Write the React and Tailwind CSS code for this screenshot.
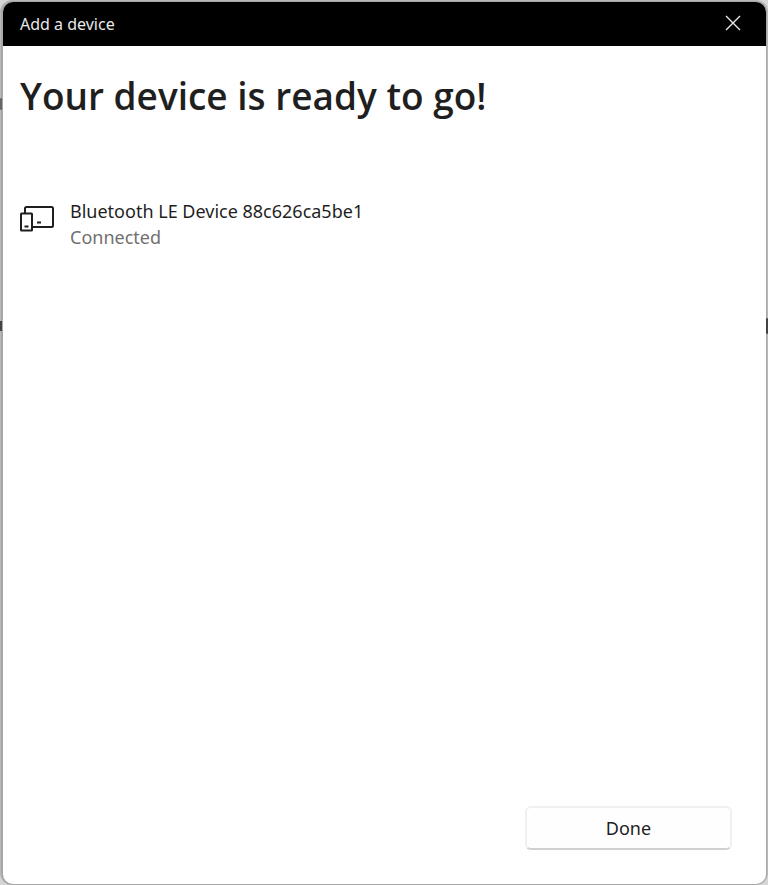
function CloseIcon() {
  return (
    <svg width="16" height="16" viewBox="0 0 16 16" fill="none" stroke="#e8e8e8" strokeWidth="1.4" aria-hidden="true">
      <path d="M1 1l14 14M15 1L1 15" />
    </svg>
  );
}

function DevicesIcon() {
  return (
    <svg width="34" height="26" viewBox="0 0 34 26" fill="none" stroke="#1f1f1f" strokeWidth="2" aria-hidden="true">
      <path d="M5 7V2.500a1.500 1.500 0 0 1 1.500-1.500H31.500a1.500 1.500 0 0 1 1.500 1.500V19.500a1.500 1.500 0 0 1-1.500 1.500H12" />
      <rect x="1" y="7.500" width="11" height="17" rx="0.500" />
      <path d="M17 16.500h4M4.500 20.500h4" />
    </svg>
  );
}

export default function App() {
  return (
    <div className="relative flex min-h-screen bg-[#d6d6d6] font-['Noto_Sans','Open_Sans',sans-serif] text-[#1f1f1f]">
      <div className="flex w-full flex-col rounded-xl border-t border-r border-l border-[#b8b8b8] bg-[#a8a8a8] pt-px pr-px pb-px pl-0.5">
        <main className="flex grow flex-col overflow-hidden rounded-[10px] bg-white">
          <header className="flex h-11 items-center justify-between bg-black pr-[25px] pl-[17px] text-[#e8e8e8]">
            <span className="text-base leading-[44px]">Add a device</span>
            <button type="button" aria-label="Close" className="flex pb-0.5">
              <CloseIcon />
            </button>
          </header>
          <section className="grow px-[17px] pt-6">
            <h1 className="font-['Open_Sans','Noto_Sans',sans-serif] text-[37px] leading-[52px] font-semibold">
              Your device is ready to go!
            </h1>
            <div className="mt-[76px] flex gap-4">
              <div className="pt-2">
                <DevicesIcon />
              </div>
              <div className="text-[18px] leading-[26px]">
                <p>Bluetooth LE Device 88c626ca5be1</p>
                <p className="text-[#707070]">Connected</p>
              </div>
            </div>
          </section>
          <footer className="flex justify-end pr-[34px] pb-[34px]">
            <button
              type="button"
              className="h-11 w-[207px] rounded-md border-2 border-[#f0f0f0] border-b-[#d0d0d0] bg-[#fefefe] text-[18px] leading-[26px]"
            >
              Done
            </button>
          </footer>
        </main>
      </div>
      {/* Slivers of the window behind, showing at the dialog's edges */}
      <span className="absolute top-[98px] left-0 h-3 w-0.5 rounded-sm bg-[#666666]" />
      <span className="absolute top-[321px] left-0 h-2.5 w-0.5 bg-[#444444]" />
      <span className="absolute top-[318px] right-0 h-4 w-0.5 rounded-sm bg-[#444444]" />
    </div>
  );
}
